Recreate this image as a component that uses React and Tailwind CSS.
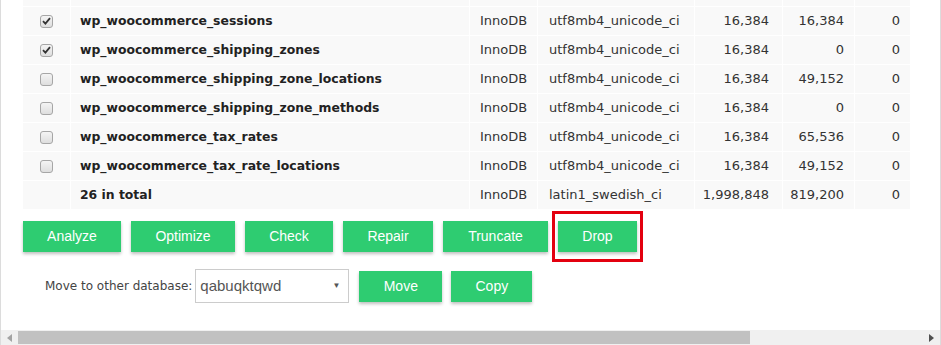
import React from "react";

const rows = [
  { name: "wp_woocommerce_sessions", checked: true, engine: "InnoDB", coll: "utf8mb4_unicode_ci", size: "16,384", index: "16,384", over: "0" },
  { name: "wp_woocommerce_shipping_zones", checked: true, engine: "InnoDB", coll: "utf8mb4_unicode_ci", size: "16,384", index: "0", over: "0" },
  { name: "wp_woocommerce_shipping_zone_locations", checked: false, engine: "InnoDB", coll: "utf8mb4_unicode_ci", size: "16,384", index: "49,152", over: "0" },
  { name: "wp_woocommerce_shipping_zone_methods", checked: false, engine: "InnoDB", coll: "utf8mb4_unicode_ci", size: "16,384", index: "0", over: "0" },
  { name: "wp_woocommerce_tax_rates", checked: false, engine: "InnoDB", coll: "utf8mb4_unicode_ci", size: "16,384", index: "65,536", over: "0" },
  { name: "wp_woocommerce_tax_rate_locations", checked: false, engine: "InnoDB", coll: "utf8mb4_unicode_ci", size: "16,384", index: "49,152", over: "0" },
];

const cols = "grid grid-cols-[47px_398px_67px_156px_87px_71px_55px] gap-px";

const Check = ({ checked }) => (
  <span className="w-[13px] h-[13px] rounded-[3px] border border-[#a6a6a6] bg-gradient-to-b from-[#f4f4f4] to-[#dedede] flex items-center justify-center">
    {checked && (
      <svg width="9" height="8" viewBox="0 0 9 8">
        <path d="M1 4.2 L3.4 6.6 L8 1.2" stroke="#333" strokeWidth="1.8" fill="none" />
      </svg>
    )}
  </span>
);

const Btn = ({ children, w }) => (
  <button className={`${w} h-[31px] bg-[#2ecc71] text-white text-[14px] font-['Liberation_Sans',Arial,sans-serif] shadow-[0_2px_3px_rgba(0,0,0,0.25)]`}>
    {children}
  </button>
);

const Cell = ({ children, className = "" }) => (
  <div className={`bg-[#f9f9f9] h-[28px] flex items-center ${className}`}>{children}</div>
);

export default function App() {
  return (
    <div className="w-[941px] h-[345px] overflow-hidden bg-white border-x border-[#dcdcdc] flex flex-col font-['DejaVu_Sans',Verdana,sans-serif] text-[13px] text-[#333]">
      <div className="pl-[22px]">
        <div className={cols}>
          {Array.from({ length: 7 }).map((_, i) => (
            <div key={i} className="bg-[#f9f9f9] h-[6px]" />
          ))}
        </div>
        <div className={`${cols} mt-px`}>
          {rows.map((r) => (
            <React.Fragment key={r.name}>
              <Cell className="justify-center"><Check checked={r.checked} /></Cell>
              <Cell className="pl-[9px] font-bold text-[12.4px] text-[#222]">{r.name}</Cell>
              <Cell className="pl-[10px]">{r.engine}</Cell>
              <Cell className="pl-[11px]">{r.coll}</Cell>
              <Cell className="justify-end pr-[13px]">{r.size}</Cell>
              <Cell className="justify-end pr-[10px]">{r.index}</Cell>
              <Cell className="justify-end pr-[10px]">{r.over}</Cell>
            </React.Fragment>
          ))}
          <Cell />
          <Cell className="pl-[9px] font-bold text-[12.4px] text-[#222]">26 in total</Cell>
          <Cell className="pl-[10px]">InnoDB</Cell>
          <Cell className="pl-[11px]">latin1_swedish_ci</Cell>
          <Cell className="justify-end pr-[13px]">1,998,848</Cell>
          <Cell className="justify-end pr-[10px]">819,200</Cell>
          <Cell className="justify-end pr-[10px]">0</Cell>
        </div>
      </div>

      <div className="flex gap-[10px] pl-[22px] mt-[12px]">
        <Btn w="w-[98px]">Analyze</Btn>
        <Btn w="w-[104px]">Optimize</Btn>
        <Btn w="w-[88px]">Check</Btn>
        <Btn w="w-[90px]">Repair</Btn>
        <Btn w="w-[105px]">Truncate</Btn>
        <span className="relative flex">
          <Btn w="w-[79px]">Drop</Btn>
          <span className="absolute -top-[10px] -bottom-[10px] -left-[6px] -right-[6px] border-[3px] border-[#e3000f] pointer-events-none" />
        </span>
      </div>

      <div className="flex items-center pl-[44px] mt-[17px]">
        <span className="text-[12px] text-[#444] mr-[3px]">Move to other database:</span>
        <div className="w-[154px] h-[34px] border border-[#ccc] bg-white flex items-center justify-between pl-[4px] pr-[8px] font-['Liberation_Sans',Arial,sans-serif] text-[15px] text-[#555]">
          <span>qabuqktqwd</span>
          <span className="text-[8px] text-[#555]">▼</span>
        </div>
        <div className="flex gap-[9px] ml-[10px]">
          <Btn w="w-[83px]">Move</Btn>
          <Btn w="w-[81px]">Copy</Btn>
        </div>
      </div>

      <div className="mt-auto h-[15px] bg-[#f0f0f0] flex items-center">
        <span className="w-[17px] flex justify-center">
          <svg width="5" height="8" viewBox="0 0 5 8"><path d="M5 0 L0 4 L5 8 Z" fill="#a3a3a3" /></svg>
        </span>
        <div className="w-[732px] h-[13px] bg-[#c1c1c1]" />
        <div className="flex-1" />
        <span className="w-[17px] flex justify-center">
          <svg width="5" height="8" viewBox="0 0 5 8"><path d="M0 0 L5 4 L0 8 Z" fill="#505050" /></svg>
        </span>
      </div>
    </div>
  );
}
